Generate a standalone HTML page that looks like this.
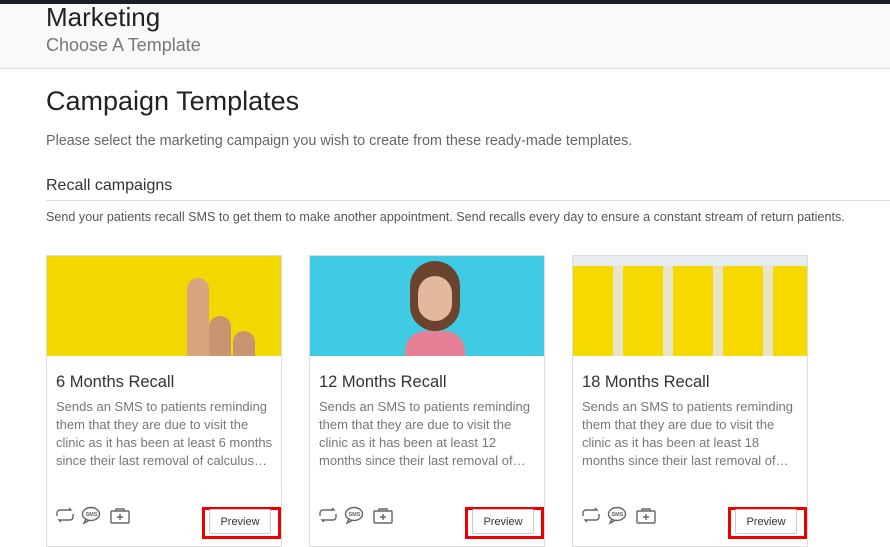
<!DOCTYPE html><html><head><style>
body{margin:0;width:890px;height:547px;overflow:hidden;font-family:"Liberation Sans",sans-serif;background:#fff;position:relative}
.top{position:absolute;left:0;top:0;width:890px;height:4px;background:#1b1e22}
.hdr{position:absolute;left:0;top:4px;width:890px;height:64px;background:#f9f9f9;border-bottom:1px solid #ddd}
.a{position:absolute;white-space:nowrap}
.card{position:absolute;top:255px;width:234px;height:290px;border:1px solid #ddd;background:#fff}
.img{height:100px;position:relative;overflow:hidden}
.card h3{position:absolute;left:9px;top:117px;margin:0;font-weight:normal;font-size:16.5px;color:#333}
.card p{position:absolute;left:9px;top:142px;margin:0;width:222px;font-size:13px;line-height:18px;color:#777;display:-webkit-box;-webkit-line-clamp:4;-webkit-box-orient:vertical;overflow:hidden}
.ic{position:absolute;top:249px;left:8px}
.btn{position:absolute;left:162px;top:253px;width:62px;height:25px;border:1px solid #ccc;border-radius:2px;font-size:11px;color:#333;text-align:center;line-height:25px;box-sizing:border-box}
.red{position:absolute;left:155px;top:251px;width:79px;height:32px;border:3px solid #e00;box-sizing:border-box}
</style></head><body>
<div class="top"></div><div class="hdr"></div>
<div class="a" style="left:46px;top:2px;font-size:26px;color:#222">Marketing</div>
<div class="a" style="left:46px;top:35px;font-size:18px;color:#777">Choose A Template</div>
<div class="a" style="left:46px;top:86px;font-size:27px;color:#222">Campaign Templates</div>
<div class="a" style="left:46px;top:133px;font-size:14.4px;color:#666">Please select the marketing campaign you wish to create from these ready-made templates.</div>
<div class="a" style="left:46px;top:177px;font-size:16px;color:#333">Recall campaigns</div>
<div style="position:absolute;left:46px;top:200px;width:844px;height:1px;background:#ddd"></div>
<div class="a" style="left:46px;top:210px;font-size:12.6px;color:#555">Send your patients recall SMS to get them to make another appointment. Send recalls every day to ensure a constant stream of return patients.</div>

<div class="card" style="left:46px"><div class="img" style="background:#f3d800"><div style="position:absolute;left:140px;top:22px;width:22px;height:90px;background:#d9a57e;border-radius:11px"></div><div style="position:absolute;left:162px;top:60px;width:22px;height:60px;background:#c99470;border-radius:11px"></div><div style="position:absolute;left:186px;top:75px;width:22px;height:60px;background:#c99470;border-radius:11px"></div></div>
<h3>6 Months Recall</h3><p>Sends an SMS to patients reminding them that they are due to visit the clinic as it has been at least 6 months since their last removal of calculus…</p>
ICONS<div class="red"></div><div class="btn">Preview</div></div>

<div class="card" style="left:309px"><div class="img" style="background:#3fcbe3"><div style="position:absolute;left:100px;top:5px;width:50px;height:70px;background:#6b4430;border-radius:25px"></div><div style="position:absolute;left:108px;top:20px;width:34px;height:45px;background:#e4b89c;border-radius:17px"></div><div style="position:absolute;left:95px;top:75px;width:60px;height:30px;background:#e57f95;border-radius:20px 20px 0 0"></div></div>
<h3>12 Months Recall</h3><p>Sends an SMS to patients reminding them that they are due to visit the clinic as it has been at least 12 months since their last removal of…</p>
ICONS<div class="red"></div><div class="btn">Preview</div></div>

<div class="card" style="left:572px"><div class="img" style="background:#e6ecef"><div style="position:absolute;left:0;top:10px;width:234px;height:90px;background:repeating-linear-gradient(90deg,#f5d900 0 40px,#e9e3c8 40px 50px)"></div></div>
<h3>18 Months Recall</h3><p>Sends an SMS to patients reminding them that they are due to visit the clinic as it has been at least 18 months since their last removal of…</p>
ICONS<div class="red"></div><div class="btn">Preview</div></div>
<script>
var ic='<svg class="ic" width="80" height="20" viewBox="0 0 80 20" fill="none" stroke="#666" stroke-width="1.4"><path d="M2 11V8a3 3 0 0 1 3-3h11l-2-2M18 9v3a3 3 0 0 1-3 3H4l2 2"/><ellipse cx="36" cy="9" rx="8.5" ry="6.5"/><path d="M31 14l-2 4 5-2.5"/><text x="30.5" y="11" font-size="5.5" fill="#666" stroke="none" font-family="Liberation Sans" font-weight="bold">SMS</text><rect x="56" y="6" width="18" height="12" rx="1"/><path d="M61 6V4h8v2M65 9v6M62 12h6"/></svg>';
document.body.innerHTML=document.body.innerHTML.split('ICONS').join(ic);
</script>
</body></html>
